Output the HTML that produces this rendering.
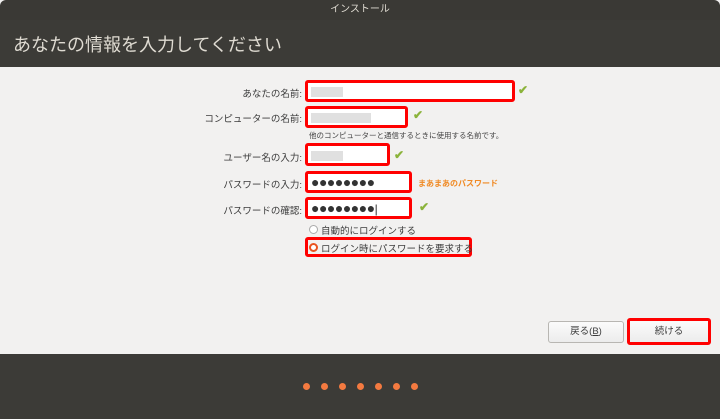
<!DOCTYPE html><html><head><meta charset="utf-8"><style>
body{margin:0;width:720px;height:419px;overflow:hidden;background:#f2f1f0;font-family:"Liberation Sans","Noto Sans CJK JP",sans-serif;position:relative}
.a{position:absolute}
.tb{left:0;top:0;width:720px;height:20px;background:#3a3935;color:#dfdbd2;font-size:10px;text-align:center;line-height:20px;border-radius:6px 6px 0 0}
.hd{left:0;top:20px;width:720px;height:47px;background:#3c3b37;color:#dfdbd2;font-size:18px;line-height:50px;padding-left:13px;box-sizing:border-box}
.lb{font-size:9.5px;color:#3c3c3c;text-align:right;width:302px;left:0}
.f{border:3px solid #f00;border-radius:3px;background:#fff;box-sizing:border-box}
.g{background:#e0e0e0;height:10px;top:4px;left:3px}
.ck{color:#8bb33a;font-size:12px;font-weight:bold}
.dot{width:7px;height:7px;border-radius:50%;background:#f47a40;top:383px}
.btn{border:1px solid #b8b6b2;border-radius:3px;background:linear-gradient(#fbfbfb,#ececec);font-size:9.5px;color:#3c3c3c;text-align:center;box-sizing:border-box}
.pw{font-size:14px;letter-spacing:-0.5px;color:#333;line-height:14px;left:3px;top:1px}
</style></head><body>
<div class="a tb">インストール</div>
<div class="a hd">あなたの情報を入力してください</div>
<div class="a lb" style="top:86px">あなたの名前:</div>
<div class="a f" style="left:305px;top:80px;width:210px;height:22px"><div class="a g" style="width:32px"></div></div>
<div class="a ck" style="left:518px;top:83px">✔</div>
<div class="a lb" style="top:111px">コンピューターの名前:</div>
<div class="a f" style="left:305px;top:106px;width:103px;height:22px"><div class="a g" style="width:60px"></div></div>
<div class="a ck" style="left:413px;top:108px">✔</div>
<div class="a" style="left:309px;top:130px;font-size:7.5px;color:#444">他のコンピューターと通信するときに使用する名前です。</div>
<div class="a lb" style="top:150px">ユーザー名の入力:</div>
<div class="a f" style="left:305px;top:143px;width:85px;height:23px"><div class="a g" style="width:32px;top:5px"></div></div>
<div class="a ck" style="left:394px;top:148px">✔</div>
<div class="a lb" style="top:177px">パスワードの入力:</div>
<div class="a f" style="left:305px;top:171px;width:107px;height:22px"><div class="a pw">●●●●●●●●</div></div>
<div class="a" style="left:418px;top:178px;font-size:8px;color:#f08a24;font-weight:bold">まあまあのパスワード</div>
<div class="a lb" style="top:203px">パスワードの確認:</div>
<div class="a f" style="left:305px;top:197px;width:107px;height:22px"><div class="a pw">●●●●●●●●<span style="font-size:12px">|</span></div></div>
<div class="a ck" style="left:419px;top:200px">✔</div>
<div class="a" style="left:309px;top:225px;width:7px;height:7px;border:1px solid #aaa;border-radius:50%;background:#fff"></div>
<div class="a" style="left:321px;top:223px;font-size:9.5px;color:#3c3c3c">自動的にログインする</div>
<div class="a f" style="left:305px;top:237px;width:167px;height:20px;background:transparent"></div>
<div class="a" style="left:309px;top:243px;width:5px;height:5px;border:2px solid #e95420;border-radius:50%;background:#fff"></div>
<div class="a" style="left:321px;top:241px;font-size:9.5px;color:#3c3c3c">ログイン時にパスワードを要求する</div>
<div class="a btn" style="left:548px;top:321px;width:76px;height:22px;line-height:20px">戻る(<u>B</u>)</div>
<div class="a f" style="left:627px;top:318px;width:84px;height:27px;background:linear-gradient(#fbfbfb,#ececec);font-size:9.5px;color:#3c3c3c;text-align:center;line-height:21px">続ける</div>
<div class="a" style="left:0;top:354px;width:720px;height:65px;background:#3c3b37"></div>
<div class="a dot" style="left:303px"></div><div class="a dot" style="left:321px"></div><div class="a dot" style="left:339px"></div><div class="a dot" style="left:357px"></div><div class="a dot" style="left:375px"></div><div class="a dot" style="left:393px"></div><div class="a dot" style="left:411px"></div>
</body></html>
